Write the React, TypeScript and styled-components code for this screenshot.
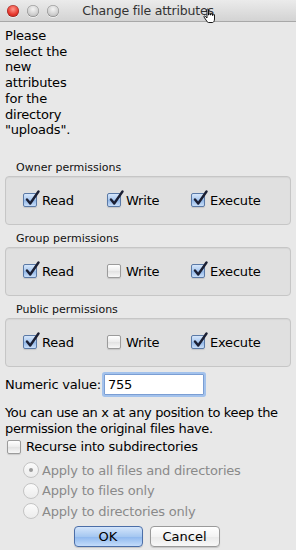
import React from "react";
import styled, { createGlobalStyle } from "styled-components";

const Global = createGlobalStyle`
  html, body { margin: 0; padding: 0; background: #e8e8e8; }
  body { font-family: "DejaVu Sans", "Liberation Sans", sans-serif; color: #000; letter-spacing: -0.2px; }
  * { box-sizing: border-box; }
`;

const Window = styled.div`
  width: 296px;
  height: 550px;
  background: #e8e8e8;
  display: flex;
  flex-direction: column;
  overflow: hidden;
`;

const TitleBar = styled.div`
  height: 22px;
  flex: 0 0 22px;
  display: flex;
  align-items: center;
  position: relative;
  background: linear-gradient(#ebebeb, #d3d3d3);
  border-bottom: 1px solid #a8a8a8;
`;

const Lights = styled.div`
  display: flex;
  gap: 8px;
  padding-left: 7px;
  align-items: center;
`;

const Light = styled.span<{ $red?: boolean }>`
  width: 12px;
  height: 12px;
  border-radius: 50%;
  display: block;
  background: ${(p) =>
    p.$red
      ? "radial-gradient(circle at 50% 35%, #ff9a8e 0%, #e5362c 55%, #a11a12 100%)"
      : "radial-gradient(circle at 50% 35%, #f4f4f4 0%, #cfcfcf 55%, #9a9a9a 100%)"};
  box-shadow: inset 0 0 0 0.5px rgba(0, 0, 0, 0.35), 0 1px 0 rgba(255,255,255,0.6);
`;

const Title = styled.div`
  position: absolute;
  left: 0;
  right: 0;
  text-align: center;
  font-size: 12.5px;
  color: #333;
  pointer-events: none;
`;

const Cursor = styled.svg`
  position: absolute;
  left: 203px;
  top: 8px;
`;

const Content = styled.div`
  padding: 6px 5px 0 5px;
  display: flex;
  flex-direction: column;
`;

const Intro = styled.div`
  font-size: 13px;
  line-height: 15.7px;
  width: 72px;
`;

const GroupLabel = styled.div<{ $first?: boolean }>`
  font-size: 11px;
  line-height: 14px;
  padding-left: 11px;
  margin-top: ${(p) => (p.$first ? "23px" : "7px")};
  color: #111;
  letter-spacing: 0;
`;

const GroupBox = styled.div`
  margin-top: 1px;
  height: 49px;
  border: 1px solid #c6c6c6;
  border-radius: 4px;
  background: #e0e0e0;
  display: grid;
  grid-template-columns: 84px 84px 1fr;
  align-items: center;
  padding-left: 17px;
  box-shadow: inset 0 1px 1px rgba(0,0,0,0.05);
`;

const CheckItem = styled.label`
  display: flex;
  align-items: center;
  gap: 5px;
  font-size: 13px;
`;

const Box = styled.span<{ $on?: boolean }>`
  width: 14px;
  height: 14px;
  flex: 0 0 14px;
  position: relative;
  border-radius: 2px;
  border: 1px solid ${(p) => (p.$on ? "#5a79a6" : "#9b9b9b")};
  background: ${(p) =>
    p.$on
      ? "linear-gradient(#d6e6fa, #a9c8ef 50%, #8fb5e6 51%, #c9def8)"
      : "linear-gradient(#ffffff, #ececec 50%, #e2e2e2 51%, #f7f7f7)"};
  box-shadow: 0 1px 1px rgba(0,0,0,0.12);
  display: block;
`;

const Tick = styled.svg`
  position: absolute;
  left: 1px;
  top: -4px;
`;

const Check = ({ on }: { on?: boolean }) => (
  <Box $on={on}>
    {on && (
      <Tick width="15" height="16" viewBox="0 0 15 16">
        <path d="M2 9.5 L5.2 13.5 L13.5 1.5" fill="none" stroke="#1b1f33" strokeWidth="2.4" strokeLinecap="round" strokeLinejoin="round" />
      </Tick>
    )}
  </Box>
);

const NumRow = styled.div`
  display: flex;
  align-items: center;
  margin-top: 7px;
  font-size: 13px;
  gap: 3px;
`;

const NumInput = styled.div`
  width: 100px;
  height: 21px;
  border: 1px solid #7b9ed3;
  box-shadow: 0 0 0 2px #a3c2ec;
  background: #fff;
  font-size: 13px;
  line-height: 19px;
  padding-left: 3px;
  border-radius: 1px;
`;

const Help = styled.div`
  font-size: 13px;
  line-height: 16px;
  margin-top: 10px;
  letter-spacing: -0.35px;
`;

const RecurseRow = styled.label`
  display: flex;
  align-items: center;
  gap: 5px;
  font-size: 13px;
  margin-top: 0px;
  padding-left: 2px;
  height: 20px;
`;

const RadioList = styled.div`
  display: flex;
  flex-direction: column;
  padding-left: 18px;
  margin-top: 3px;
`;

const RadioRow = styled.label`
  display: flex;
  align-items: center;
  gap: 3px;
  height: 20.5px;
  font-size: 13px;
  color: #8a8a8a;
`;

const RadioDot = styled.span<{ $on?: boolean }>`
  width: 16px;
  height: 16px;
  border-radius: 50%;
  border: 1px solid #c4c4c4;
  background: linear-gradient(#fbfbfb, #ececec);
  display: flex;
  align-items: center;
  justify-content: center;
  &::after {
    content: "";
    width: 4px;
    height: 4px;
    border-radius: 50%;
    background: ${(p) => (p.$on ? "#9a9a9a" : "transparent")};
  }
`;

const Buttons = styled.div`
  display: flex;
  justify-content: center;
  gap: 7px;
  margin-top: 5px;
  padding-right: 3px;
`;

const Button = styled.button<{ $primary?: boolean }>`
  width: ${(p) => (p.$primary ? "69px" : "70px")};
  height: 21px;
  border-radius: 4px;
  font-family: inherit;
  font-size: 13px;
  color: #000;
  padding: 0;
  border: 1px solid ${(p) => (p.$primary ? "#4b6ea8" : "#9a9a9a")};
  background: ${(p) =>
    p.$primary
      ? "linear-gradient(#d4e5fb, #a6c8f1 50%, #8db7ee 51%, #c4dcfa)"
      : "linear-gradient(#ffffff, #f3f3f3 50%, #e9e9e9 51%, #f8f8f8)"};
  box-shadow: 0 1px 1px rgba(0,0,0,0.15);
`;

const groups = [
  { name: "Owner permissions", r: true, w: true, x: true },
  { name: "Group permissions", r: true, w: false, x: true },
  { name: "Public permissions", r: true, w: false, x: true },
];

export default function App() {
  return (
    <Window>
      <Global />
      <TitleBar>
        <Lights>
          <Light $red />
          <Light />
          <Light />
        </Lights>
        <Title>Change file attributes</Title>
        <Cursor width="14" height="16" viewBox="0 0 14 16">
          <path d="M4 1.5 C4 0.8 5.5 0.8 5.5 1.5 L5.5 7 L6 7 L6 5.5 C6 4.8 7.5 4.8 7.5 5.5 L7.5 7 L8 7 L8 6 C8 5.3 9.5 5.3 9.5 6 L9.5 7.5 L10 7.5 L10 6.8 C10 6.1 11.5 6.1 11.5 6.8 L11.5 11 C11.5 13 10.5 14.5 9.5 14.5 L5.5 14.5 C4.5 14.5 4 13.5 3 12 L1 9 C0.6 8.3 1.6 7.6 2.2 8.3 L4 10 Z" fill="#fff" stroke="#000" strokeWidth="0.9" />
        </Cursor>
      </TitleBar>
      <Content>
        <Intro>Please select the new attributes for the directory "uploads".</Intro>
        {groups.map((g, i) => (
          <React.Fragment key={g.name}>
            <GroupLabel $first={i === 0}>{g.name}</GroupLabel>
            <GroupBox>
              <CheckItem><Check on={g.r} />Read</CheckItem>
              <CheckItem><Check on={g.w} />Write</CheckItem>
              <CheckItem><Check on={g.x} />Execute</CheckItem>
            </GroupBox>
          </React.Fragment>
        ))}
        <NumRow>
          Numeric value:
          <NumInput>755</NumInput>
        </NumRow>
        <Help>You can use an x at any position to keep the permission the original files have.</Help>
        <RecurseRow><Check />Recurse into subdirectories</RecurseRow>
        <RadioList>
          <RadioRow><RadioDot $on />Apply to all files and directories</RadioRow>
          <RadioRow><RadioDot />Apply to files only</RadioRow>
          <RadioRow><RadioDot />Apply to directories only</RadioRow>
        </RadioList>
        <Buttons>
          <Button $primary>OK</Button>
          <Button>Cancel</Button>
        </Buttons>
      </Content>
    </Window>
  );
}
